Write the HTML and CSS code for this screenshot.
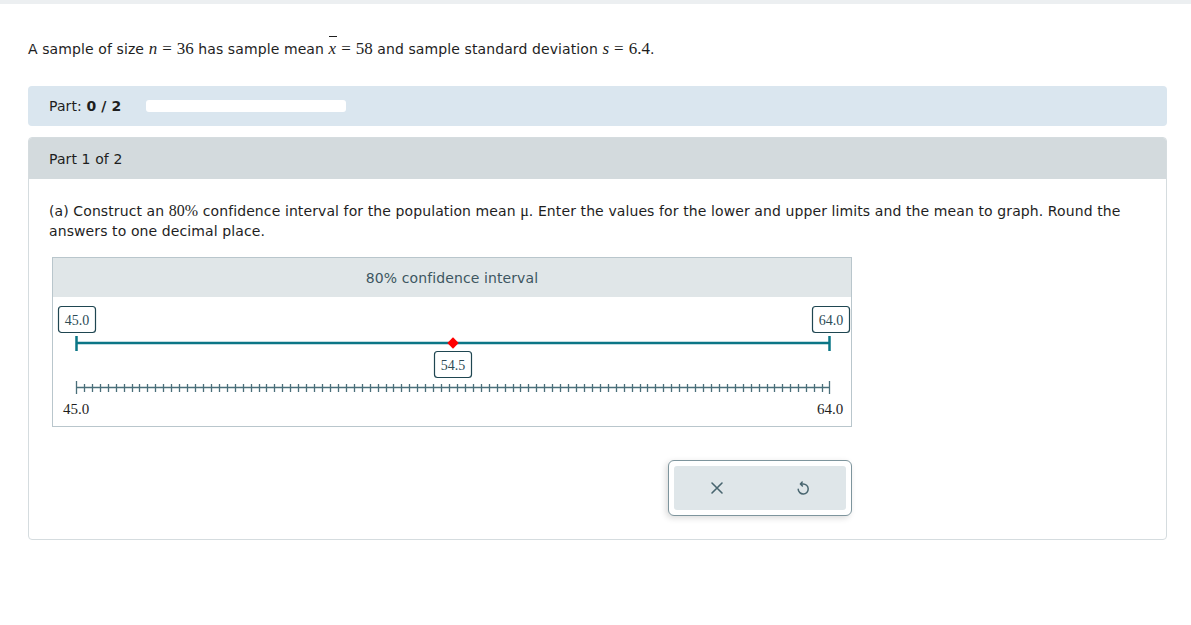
FILE: index.html
```html
<!DOCTYPE html>
<html>
<head>
<meta charset="utf-8">
<link rel="stylesheet" href="styles.css">
</head>
<body>
<div class="topstrip"></div>
<div class="page">
  <p class="problem">A sample of size <span class="m"><i>n</i><span class="op">=</span>36</span> has sample mean <span class="m"><i class="xbar">x</i><span class="op">=</span>58</span> and sample standard deviation <span class="m"><i>s</i><span class="op">=</span>6.4</span>.</p>

  <div class="partbar">
    <span class="partlabel">Part: <b>0 / 2</b></span>
    <div class="progress"></div>
  </div>

  <div class="card">
    <div class="cardhead">Part 1 of 2</div>
    <div class="cardbody">
      <p class="question">(a) Construct an <span class="m">80%</span> confidence interval for the population mean <span class="m">μ</span>. Enter the values for the lower and upper limits and the mean to graph. Round the answers to one decimal place.</p>

      <div class="graphwrap">
        <div class="graph">
          <div class="graphhead">80% confidence interval</div>
          <svg class="plot" width="798" height="129" viewBox="0 0 798 129">
            <g class="axis">
              <line x1="23" y1="90.5" x2="777" y2="90.5"/>
              <path id="ticks" d=""/>
              <line x1="23.5" y1="84" x2="23.5" y2="97" />
              <line x1="776.5" y1="84" x2="776.5" y2="97" />
            </g>
            <text class="axlabel" x="23" y="117" text-anchor="middle">45.0</text>
            <text class="axlabel" x="777" y="117" text-anchor="middle">64.0</text>

            <g class="interval">
              <line x1="23" y1="46" x2="777" y2="46"/>
              <line x1="23.5" y1="39" x2="23.5" y2="54"/>
              <line x1="776.5" y1="39" x2="776.5" y2="54"/>
            </g>
            <rect class="diamond" x="396" y="42" width="8" height="8" transform="rotate(45 400 46)"/>

            <rect class="vbox" x="5.5" y="9.5" width="37" height="26" rx="3"/>
            <text class="vtext" x="24" y="27.5" text-anchor="middle">45.0</text>
            <rect class="vbox" x="759.5" y="9.5" width="37" height="26" rx="3"/>
            <text class="vtext" x="778" y="27.5" text-anchor="middle">64.0</text>
            <rect class="vbox" x="381.5" y="54.5" width="37" height="26" rx="3"/>
            <text class="vtext" x="400" y="72.5" text-anchor="middle">54.5</text>
          </svg>
        </div>
        <div class="actions">
          <div class="actionsinner">
            <button class="btn" aria-label="clear">
              <svg width="14" height="14" viewBox="0 0 14 14"><path d="M2 2 L12 12 M12 2 L2 12" stroke="#48656f" stroke-width="1.6" fill="none" stroke-linecap="round"/></svg>
            </button>
            <button class="btn" aria-label="undo">
              <svg width="16" height="16" viewBox="0 0 16 16"><path d="M3.2 9.2 A5 5 0 1 0 8 4 H5.6 M7.2 2 L5.4 4 L7.4 6" stroke="#48656f" stroke-width="1.5" fill="none" stroke-linecap="round" stroke-linejoin="round"/></svg>
            </button>
          </div>
        </div>
      </div>
    </div>
  </div>
</div>
<script>
  (function(){
    var d = "";
    var n = 95, x0 = 23, x1 = 777;
    for (var i = 1; i < n; i++) {
      var x = Math.round(x0 + (x1 - x0) * i / n) + 0.5;
      d += "M" + x + " 87 V95 ";
    }
    document.getElementById("ticks").setAttribute("d", d);
  })();
</script>
</body>
</html>
```

FILE: styles.css
```css
* { box-sizing: border-box; }
html, body { margin: 0; padding: 0; background: #ffffff; }
body {
  font-family: "DejaVu Sans", Verdana, sans-serif;
  font-size: 14px;
  letter-spacing: 0.1px;
  color: #1e1e1e;
}
.topstrip { height: 4px; background: #eceff1; }
.page { padding: 0 24px 0 28px; }
.problem { margin: 35px 0 0 0; line-height: 20px; }
.m { font-family: "Liberation Serif", "Times New Roman", serif; font-size: 17px; letter-spacing: 0; line-height: 1; }
.question .m { display: inline-block; font-size: 16px; }
.m i { font-style: italic; }
.op { margin: 0 5px; }
.xbar { position: relative; display: inline-block; }
.xbar::before {
  content: "";
  position: absolute;
  left: 0;
  right: -1px;
  top: -4px;
  border-top: 1px solid #1e1e1e;
}

.partbar {
  margin-top: 27px;
  height: 40px;
  background: #dae6ef;
  border-radius: 4px;
  display: flex;
  align-items: center;
  padding-left: 21px;
  gap: 25px;
}
.partlabel b { font-weight: bold; }
.progress { width: 200px; height: 12px; background: #ffffff; border-radius: 3px; }

.card {
  margin-top: 11px;
  border: 1px solid #d5dcdf;
  border-radius: 4px;
  overflow: hidden;
}
.cardhead {
  height: 41px;
  background: #d3dadd;
  display: flex;
  align-items: center;
  padding-left: 20px;
}
.cardbody { padding: 22px 20px 23px 20px; }
.question { margin: 0; line-height: 20px; }

.graphwrap { width: 800px; margin: 16px 0 0 3px; }
.graph { border: 1px solid #b9c6cc; }
.graphhead {
  height: 39px;
  background: #e0e6e8;
  color: #3d5661;
  display: flex;
  align-items: center;
  justify-content: center;
}
.plot { display: block; }
.axis line, .axis path { stroke: #4a6f7a; stroke-width: 1.3; fill: none; }
.interval line { stroke: #0b7686; stroke-width: 2.5; }
.diamond { fill: #ff0000; }
.vbox { fill: #ffffff; stroke: #1f4651; stroke-width: 1.2; }
.vtext { font-family: "Liberation Serif", "Times New Roman", serif; font-size: 14px; fill: #2d4b56; letter-spacing: 0; }
.axlabel { font-family: "Liberation Serif", "Times New Roman", serif; font-size: 15px; fill: #1e1e1e; letter-spacing: 0; }

.actions {
  margin: 33px 0 0 auto;
  width: 184px;
  height: 56px;
  border: 1px solid #7e959d;
  border-radius: 6px;
  background: #ffffff;
  padding: 5px;
  box-shadow: -2px 2px 6px rgba(0, 0, 0, 0.15);
}
.actionsinner {
  height: 100%;
  background: #dfe6e9;
  border-radius: 3px;
  display: flex;
  justify-content: space-around;
  align-items: center;
}
.btn {
  background: transparent;
  border: 0;
  padding: 0;
  width: 40px;
  height: 32px;
  display: flex;
  align-items: center;
  justify-content: center;
}
```
